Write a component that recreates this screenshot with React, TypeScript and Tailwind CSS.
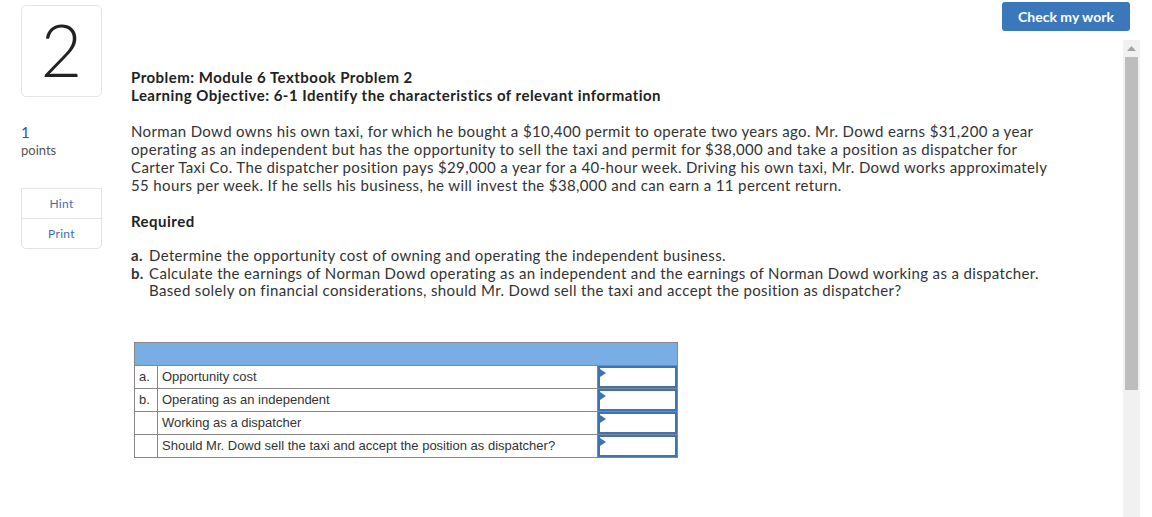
import type { ReactNode } from "react";

type Row = {
    label: string;
    text: string;
};

const ROWS: Row[] = [
    { label: "a.", text: "Opportunity cost" },
    { label: "b.", text: "Operating as an independent" },
    { label: "", text: "Working as a dispatcher" },
    { label: "", text: "Should Mr. Dowd sell the taxi and accept the position as dispatcher?" },
];

function Line({ children }: { children: ReactNode }) {
    return <span className="block whitespace-nowrap">{children}</span>;
}

function AnswerCell() {
    return (
        <div className="relative h-full border-2 border-[#3d72b4] bg-white">
            {/* little marker in the corner of each input */}
            <span className="absolute left-0 top-[1px] h-0 w-0 border-y-[4px] border-l-[6px] border-y-transparent border-l-[#3d72b4]" />
        </div>
    );
}

function ScrollTrack() {
    return (
        <div className="flex h-full w-[17px] flex-col items-center bg-[#f1f1f1]">
            <svg width="9" height="5" viewBox="0 0 9 5" className="mt-[6px]">
                <polygon points="4.5,0 9,5 0,5" fill="#a3a3a3" />
            </svg>
            <div className="mt-[6px] h-[333px] w-[13px] bg-[#bdbdbd]" />
        </div>
    );
}

export default function App() {
    return (
        <div className="flex h-[517px] w-[1152px] overflow-hidden bg-white font-['Lato',sans-serif] text-[#333]">
            <div className="w-[102px] shrink-0 pl-[21px] pt-[5px]">
                <div className="flex h-[92px] w-[81px] items-center justify-center rounded-[5px] border border-[#e6e6e6]">
                    <span className="mt-[-4px] text-[72px] font-light leading-none text-[#222]">2</span>
                </div>
                <div className="mt-[26px]">
                    <div className="text-[15px] leading-[18px] text-[#1d5c9e]">1</div>
                    <div className="mt-[1px] text-[13px] leading-[16px] text-[#555]">points</div>
                </div>
                <div className="mt-[30px] w-[81px] rounded-b-[5px] border border-[#e3e3e3] text-[12px] tracking-[0.3px] text-[#3d6fae]">
                    <div className="flex h-[30px] items-center justify-center border-b border-[#e3e3e3]">Hint</div>
                    <div className="flex h-[29px] items-center justify-center">Print</div>
                </div>
            </div>

            <div className="flex flex-1 flex-col">
                <div className="flex h-[40px] justify-end pr-[22px] pt-[2px]">
                    <button className="h-[29px] w-[128px] rounded-[3px] bg-[#3a77bb] text-[14px] font-bold text-white">
                        Check my work
                    </button>
                </div>

                <div className="flex min-h-0 flex-1">
                    <div className="flex-1 pl-[29px] pt-[28px] text-[15px] leading-[18px] tracking-[0.36px]">
                        <div className="font-bold tracking-[0.48px] text-[#222]">
                            <Line>Problem: Module 6 Textbook Problem 2</Line>
                            <Line>Learning Objective: 6-1 Identify the characteristics of relevant information</Line>
                        </div>

                        <p className="mt-[18px]">
                            <Line>Norman Dowd owns his own taxi, for which he bought a $10,400 permit to operate two years ago. Mr. Dowd earns $31,200 a year</Line>
                            <Line>operating as an independent but has the opportunity to sell the taxi and permit for $38,000 and take a position as dispatcher for</Line>
                            <Line>Carter Taxi Co. The dispatcher position pays $29,000 a year for a 40-hour week. Driving his own taxi, Mr. Dowd works approximately</Line>
                            <Line>55 hours per week. If he sells his business, he will invest the $38,000 and can earn a 11 percent return.</Line>
                        </p>

                        <div className="mt-[18px] font-bold tracking-[0.48px] text-[#222]">Required</div>

                        <div className="mt-[17px] leading-[17.5px]">
                            <div className="flex">
                                <span className="w-[18px] font-bold">a.</span>
                                <span>Determine the opportunity cost of owning and operating the independent business.</span>
                            </div>
                            <div className="flex">
                                <span className="w-[18px] shrink-0 font-bold">b.</span>
                                <span>
                                    <Line>Calculate the earnings of Norman Dowd operating as an independent and the earnings of Norman Dowd working as a dispatcher.</Line>
                                    <Line>Based solely on financial considerations, should Mr. Dowd sell the taxi and accept the position as dispatcher?</Line>
                                </span>
                            </div>
                        </div>

                        <table className="ml-[3px] mt-[42px] w-[544px] border-collapse font-['Liberation_Sans',Arial,sans-serif] text-[13px] tracking-normal text-[#333]">
                            <thead>
                                <tr>
                                    <th colSpan={3} className="h-[23px] border border-[#878787] bg-[#7aade3] p-0" />
                                </tr>
                            </thead>
                            <tbody>
                                {ROWS.map((row, i) => (
                                    <tr key={i}>
                                        <td className="h-[22px] w-[23px] border border-[#878787] px-[4px] py-0 leading-[22px]">{row.label}</td>
                                        <td className="h-[22px] border border-[#878787] px-[4px] py-0 leading-[22px]">{row.text}</td>
                                        <td className="h-[22px] w-[80px] border border-[#878787] p-0">
                                            <div className="h-[22px]">
                                                <AnswerCell />
                                            </div>
                                        </td>
                                    </tr>
                                ))}
                            </tbody>
                        </table>
                    </div>
                    <div className="mr-[12px]">
                        <ScrollTrack />
                    </div>
                </div>
            </div>
        </div>
    );
}
